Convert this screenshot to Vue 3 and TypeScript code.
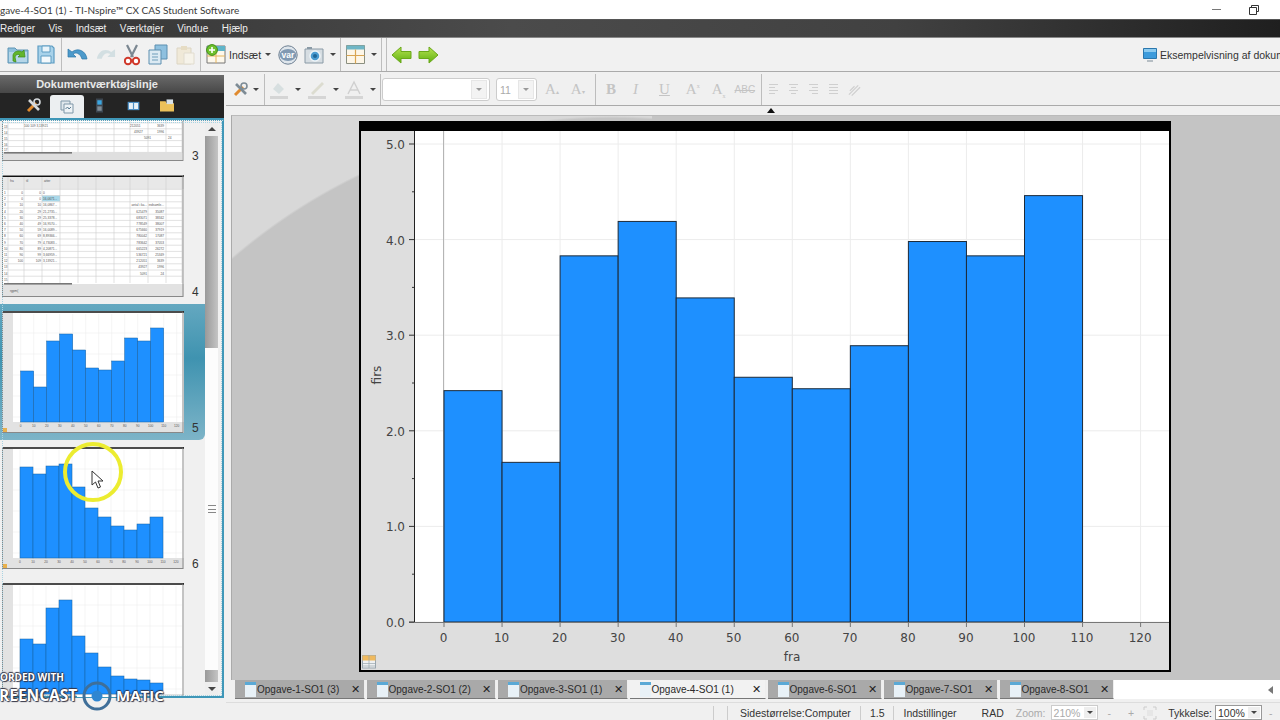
<script setup lang="ts">
const menus = ['Rediger', 'Vis', 'Indsæt', 'Værktøjer', 'Vindue', 'Hjælp'];

const bars = [2.42, 1.67, 3.83, 4.19, 3.39, 2.56, 2.44, 2.89, 3.98, 3.83, 4.46];
const xTicks = Array.from({ length: 13 }, (_, i) => i * 10);
const yTicks = [0, 1, 2, 3, 4, 5];
const yMinor = [0.5, 1.5, 2.5, 3.5, 4.5];
const xAt = (v: number) => 444 + v * 5.805;
const yAt = (v: number) => 622 - v * 95.6;

const tabs = [
  { name: 'Opgave-1-SO1 (3)', size: 'long' },
  { name: 'Opgave-2-SO1 (2)', size: 'long' },
  { name: 'Opgave-3-SO1 (1)', size: 'long' },
  { name: 'Opgave-4-SO1 (1)', size: 'active' },
  { name: 'Opgave-6-SO1', size: 'short' },
  { name: 'Opgave-7-SO1', size: 'short' },
  { name: 'Opgave-8-SO1', size: 'short' },
];

const chartThumbs = [
  { n: 5, selected: true, x0: 18.7, tops: [59, 75, 29, 22, 38, 56, 58, 49, 26, 29, 16] },
  { n: 6, selected: false, x0: 18, tops: [19, 26, 18, 16, 39, 60, 69, 78, 82, 76, 69] },
  { n: 7, selected: false, x0: 18, tops: [55, 60, 24, 16, 52, 69, 83, 92, 95, 96, 99] },
];

const alignPaths = [
  'M1 1.5h9M1 4.5h6M1 7.5h9M1 10.5h6',
  'M1 1.5h9M3 4.5h5M1 7.5h9M3 10.5h5',
  'M1 1.5h9M4 4.5h6M1 7.5h9M4 10.5h6',
  'M1 1.5h9M1 4.5h9M1 7.5h9M1 10.5h9',
];

const sheetCols = [0, 6, 22, 40, 58, 76, 94, 112, 128, 146, 164, 180];
const sheetRows = [
  ['0', '0', '0', '', ''],
  ['0', '0', '16,0671...', '', ''],
  ['10', '10', '16,0867...', 'antal i ka...', 'indsamle...'],
  ['20', '29', '21,2735...', '625479', '35087'],
  ['30', '29', '25,3378...', '683071', '38342'],
  ['40', '49', '16,9570...', '778549', '38007'],
  ['50', '59', '16,0089...', '675660', '37919'],
  ['60', '69', '8,89366...', '780042', '17087'],
  ['70', '79', '4,73083...', '783642', '37053'],
  ['80', '89', '4,20871...', '665223', '26272'],
  ['90', '99', '3,66959...', '536721', '25349'],
  ['100', '109', '3,13921...', '212051', '3639'],
  ['', '', '', '43927', '1996'],
  ['', '', '', '5091', '24'],
  ['', '', '', '', ''],
];
</script>

<template>
  <div class="app">
    <header class="title">
      <span>gave-4-SO1 (1) - TI-Nspire™ CX CAS Student Software</span>
      <div class="win">
        <i class="win-min"></i>
        <svg width="10" height="10" viewBox="0 0 10 10"><path d="M2.5 2.5V.5h7v6h-2M.5 2.5h7v7h-7z" fill="none" stroke="#333" /></svg>
      </div>
    </header>

    <nav class="menu">
      <span v-for="m in menus" :key="m">{{ m }}</span>
    </nav>

    <div class="toolbar">
      <div class="group first">
        <svg width="22" height="21" viewBox="0 0 22 21">
          <path d="M1 4h7l2 2h11v13H1z" fill="#8fc0dc" stroke="#5f94b4" />
          <path d="M2 8h18v10H2z" fill="#b5d6e8" />
          <path d="M6 11c1-4 6-5 9-3l2-2 1 7-7 0 2-2c-2-1-4-1-5 2l1 5-3-1z" fill="#62b52c" stroke="#3d8a15" stroke-width=".7" />
        </svg>
        <svg width="18" height="21" viewBox="0 0 18 21">
          <path d="M1 2h14l2 2v15H1z" fill="#a8d2ea" stroke="#5d9cc2" stroke-width="1.2" />
          <path d="M5 2h8v6H5z" fill="#e9f4fa" stroke="#5d9cc2" />
          <path d="M4 12h10v7H4z" fill="#f4f9fc" stroke="#5d9cc2" />
        </svg>
      </div>
      <i class="sep"></i>
      <div class="group">
        <svg width="21" height="21" viewBox="0 0 21 21">
          <path d="M1 5l0 8 8 0-3-3c3-2 7-1 9 5l5 0c-1-8-9-12-15-7z" fill="#4c9acb" stroke="#2d76a8" stroke-width=".7" stroke-linejoin="round" />
        </svg>
        <svg width="20" height="21" viewBox="0 0 21 21">
          <path d="M20 5l0 8-8 0 3-3c-3-2-7-1-9 5l-5 0c1-8 9-12 15-7z" fill="#d3dfe2" />
        </svg>
        <svg width="16" height="22" viewBox="0 0 16 22">
          <path d="M3 1l6 12M13 1L7 13" stroke="#7b8791" stroke-width="2.2" fill="none" />
          <circle cx="4" cy="17" r="3.2" fill="#fff" stroke="#d0392b" stroke-width="2" />
          <circle cx="12" cy="17" r="3.2" fill="#fff" stroke="#d0392b" stroke-width="2" />
        </svg>
        <svg width="20" height="21" viewBox="0 0 20 21">
          <path d="M7 1h12v14H7z" fill="#8ec0df" stroke="#5d8fb0" />
          <path d="M1 6h12v14H1z" fill="#dceaf3" stroke="#5d8fb0" />
          <path d="M4 10h6M4 13h6M4 16h6" stroke="#6f9dba" />
        </svg>
        <svg width="19" height="21" viewBox="0 0 19 21">
          <path d="M1 4h14v16H1z" fill="#f0e9d8" stroke="#dcd5c3" />
          <path d="M5 2h6v4H5z" fill="#e6dcc4" />
          <path d="M8 9h10v11H8z" fill="#f6f3ea" stroke="#e1dccf" />
        </svg>
      </div>
      <i class="sep"></i>
      <div class="group insert">
        <svg width="20" height="21" viewBox="0 0 20 21">
          <path d="M1 2h18v17H1z" fill="#fdf8ec" stroke="#777" />
          <path d="M1 2h18v5H1z" fill="#5fb4c9" />
          <path d="M10 7v12M1 12h18" stroke="#e6b45c" />
          <circle cx="6" cy="6" r="5.4" fill="#6fc12e" stroke="#3f8f14" />
          <path d="M6 3v6M3 6h6" stroke="#fff" stroke-width="1.6" />
        </svg>
        <span class="tb-label">Indsæt</span>
        <i class="caret"></i>
        <svg class="var-icon" width="20" height="20" viewBox="0 0 20 20">
          <circle cx="10" cy="10" r="9.2" fill="#dfe6ec" stroke="#6d7f92" />
          <ellipse cx="10" cy="10" rx="8.4" ry="6" fill="#8199b2" />
          <text x="10" y="13" text-anchor="middle" class="var-text">var</text>
        </svg>
        <svg class="cam-icon" width="20" height="18" viewBox="0 0 20 18">
          <path d="M1 3h18v14H1z" fill="#d6dde2" stroke="#8a9aa6" />
          <path d="M3 1h5v2H3z" fill="#8a9aa6" />
          <circle cx="11" cy="10" r="5" fill="#4a9bd0" stroke="#eef4f8" stroke-width="1.5" />
          <circle cx="11" cy="10" r="2" fill="#1f6698" />
        </svg>
        <i class="caret"></i>
      </div>
      <i class="sep"></i>
      <div class="group layout">
        <svg width="19" height="19" viewBox="0 0 19 19">
          <path d="M.5.5h18v18H.5z" fill="#fdf6e8" stroke="#8a8f80" />
          <path d="M.5.5h18v4H.5z" fill="#6fb6c6" />
          <path d="M9.5 4.5v14M.5 10.5h18" stroke="#d9a552" stroke-width="1.2" />
        </svg>
        <i class="caret"></i>
      </div>
      <i class="sep"></i>
      <i class="sep second"></i>
      <div class="group arrows">
        <svg width="21" height="20" viewBox="0 0 21 20">
          <defs>
            <linearGradient id="go" x1="0" y1="0" x2="0" y2="1">
              <stop offset="0" stop-color="#b6e352" />
              <stop offset="1" stop-color="#5fb010" />
            </linearGradient>
          </defs>
          <path d="M1 10L10 2v4.5h10v7H10V18z" fill="url(#go)" stroke="#6aa81a" stroke-linejoin="round" />
        </svg>
        <svg width="21" height="20" viewBox="0 0 21 20">
          <path d="M20 10L11 2v4.5H1v7h10V18z" fill="url(#go)" stroke="#6aa81a" stroke-linejoin="round" />
        </svg>
      </div>
      <div class="preview">
        <svg width="14" height="14" viewBox="0 0 14 14">
          <path d="M.5.5h13v10H.5z" fill="#3c9bdc" stroke="#2b77ad" />
          <path d="M1 1h12v3H1z" fill="#8ccbf0" />
          <path d="M4 12.5h6v1H4z" fill="#7b8b96" />
        </svg>
        <span>Eksempelvisning af dokument</span>
      </div>
    </div>

    <div class="workspace">
      <aside class="side">
        <div class="side-head">Dokumentværktøjslinje</div>
        <div class="side-tabs">
          <svg width="15" height="15" viewBox="0 0 15 15">
            <path d="M2 13L10 5" stroke="#e08a2e" stroke-width="3" />
            <path d="M3 2l10 10" stroke="#d5d9dc" stroke-width="2.6" />
            <circle cx="11" cy="4" r="3" fill="none" stroke="#d5d9dc" stroke-width="1.6" />
          </svg>
          <div class="side-tab">
            <svg width="14" height="14" viewBox="0 0 14 14">
              <path d="M1 1h9v9H1z" fill="#dfe7ec" stroke="#7f97a8" />
              <path d="M4 4h9v9H4z" fill="#eef3f6" stroke="#7f97a8" />
              <path d="M5.5 9l2-2 1.5 2 2-2" fill="none" stroke="#5a7c92" />
            </svg>
          </div>
          <svg class="hand" width="7" height="15" viewBox="0 0 8 16">
            <path d="M0 0h8v16H0z" fill="#3c4650" />
            <path d="M1.5 2h5v5h-5z" fill="#3ba6e0" />
            <path d="M1.5 9h5v5h-5z" fill="#808c96" />
          </svg>
          <svg class="book" width="13" height="10" viewBox="0 0 14 12">
            <path d="M0 1h14v10H0z" fill="#4d8fc4" />
            <path d="M1.5 2.5h4.8v7H1.5zM7.7 2.5h4.8v7H7.7z" fill="#e6f1f8" />
          </svg>
          <svg class="fold" width="14" height="13" viewBox="0 0 15 13">
            <path d="M0 2h6l1 2h8v9H0z" fill="#ecc15a" />
            <path d="M7 0h7v5H7z" fill="#d9e3ea" />
          </svg>
        </div>
        <div class="list">
          <div class="rows">
            <div class="row row-clip">
              <svg class="thumb" width="182" height="122" viewBox="0 0 182 122">
                <rect width="182" height="122" fill="#fff" />
                <g v-for="i in 7" :key="i">
                  <line x1="0" x2="180" :y1="78 + i * 5.9" :y2="78 + i * 5.9" stroke="#ccc" stroke-width=".6" />
                  <text v-if="i > 1" x="2" :y="77 + i * 5.9" class="tiny">{{ 11 + i }}</text>
                </g>
                <line v-for="c in sheetCols" :key="c" :x1="c" :x2="c" y1="0" y2="114" stroke="#ccc" stroke-width=".6" />
                <text x="22" y="88" class="tiny">100 109 3,13921</text>
                <text x="128" y="88" class="tiny">212051</text>
                <text x="155" y="88" class="tiny">3639</text>
                <text x="132" y="94" class="tiny">43927</text>
                <text x="155" y="94" class="tiny">1996</text>
                <text x="142" y="100" class="tiny">5091</text>
                <text x="166" y="100" class="tiny">24</text>
                <rect y="113" width="180" height="9" fill="#dfdfdf" />
                <rect x="2" y="113" width="68" height="1.6" fill="#777" />
                <rect x=".5" y=".5" width="180.5" height="121" fill="none" stroke="#888" />
              </svg>
              <span class="num">3</span>
            </div>

            <div class="row">
              <svg class="thumb" width="182" height="122" viewBox="0 0 182 122">
                <rect width="182" height="122" fill="#fff" />
                <rect width="182" height="2" fill="#111" />
                <rect y="2" width="182" height="12" fill="#e8e8e8" />
                <rect x="40" y="20.5" width="18" height="6" fill="#a8d8ea" />
                <text x="8" y="7" class="tiny">fra</text>
                <text x="24" y="7" class="tiny">til</text>
                <text x="42" y="7" class="tiny">atter</text>
                <g v-for="(r, i) in sheetRows" :key="i">
                  <line x1="0" x2="180" :y1="14.4 + i * 6.2" :y2="14.4 + i * 6.2" stroke="#ccc" stroke-width=".6" />
                  <text x="2" :y="19 + i * 6.2" class="tiny">{{ i + 1 }}</text>
                  <text x="21" :y="19 + i * 6.2" class="tiny" text-anchor="end">{{ r[0] }}</text>
                  <text x="39" :y="19 + i * 6.2" class="tiny" text-anchor="end">{{ r[1] }}</text>
                  <text x="41" :y="19 + i * 6.2" class="tiny">{{ r[2] }}</text>
                  <text x="145" :y="19 + i * 6.2" class="tiny" text-anchor="end">{{ r[3] }}</text>
                  <text x="162" :y="19 + i * 6.2" class="tiny" text-anchor="end">{{ r[4] }}</text>
                </g>
                <line v-for="c in sheetCols" :key="c" :x1="c" :x2="c" y1="2" y2="108" stroke="#ccc" stroke-width=".6" />
                <rect y="109" width="182" height="13" fill="#e2e2e2" />
                <rect x="2" y="108" width="68" height="1.6" fill="#777" />
                <text x="8" y="117" class="tiny">rgpm(</text>
                <rect x=".5" y=".5" width="180.5" height="121" fill="none" stroke="#888" />
              </svg>
              <span class="num">4</span>
            </div>

            <div v-for="t in chartThumbs" :key="t.n" class="row" :class="{ selected: t.selected }">
              <svg class="thumb" width="182" height="122" viewBox="0 0 182 122">
                <rect width="182" height="122" fill="#fff" />
                <rect y="111" width="182" height="11" fill="#e2e2e2" />
                <rect width="11" height="122" fill="#e2e2e2" />
                <g transform="translate(0 1)">
                  <line v-for="g in 13" :key="'v' + g" :x1="t.x0 + (g - 1) * 13" :x2="t.x0 + (g - 1) * 13" y1="2" y2="110" stroke="#eee" stroke-width=".6" />
                  <line v-for="g in 5" :key="'h' + g" x1="11" x2="180" :y1="g * 21" :y2="g * 21" stroke="#eee" stroke-width=".6" />
                  <rect
                    v-for="(top, i) in t.tops"
                    :key="i"
                    :x="t.x0 + i * 13"
                    :y="top"
                    width="13"
                    :height="110 - top"
                    fill="#1e90ff"
                    stroke="#17609f"
                    stroke-width=".5"
                  />
                  <template v-if="t.n < 7">
                    <text v-for="g in 13" :key="'l' + g" :x="t.x0 + (g - 1) * 13" y="115" class="tiny" text-anchor="middle">{{ (g - 1) * 10 }}</text>
                  </template>
                </g>
                <rect width="182" height="2" fill="#111" />
                <rect x=".5" y="1" width="180.5" height="120.5" fill="none" stroke="#888" />
                <rect x="1" y="117" width="4" height="4" fill="#e8b04c" />
              </svg>
              <span v-if="t.n < 7" class="num">{{ t.n }}</span>
            </div>
          </div>

          <div class="scroll">
            <div class="scroll-btn"><i class="tri up"></i></div>
            <div class="scroll-track top"></div>
            <div class="scroll-thumb"><i class="grip"></i></div>
            <div class="scroll-track bottom"></div>
            <div class="scroll-btn"><i class="tri down"></i></div>
          </div>
        </div>
      </aside>

      <main class="content">
        <div class="format">
          <svg width="15" height="15" viewBox="0 0 15 15">
            <path d="M2 13L10 5" stroke="#e08a2e" stroke-width="3" />
            <path d="M3 2l10 10" stroke="#7d8b95" stroke-width="2.6" />
            <circle cx="11" cy="4" r="3" fill="none" stroke="#7d8b95" stroke-width="1.6" />
          </svg>
          <i class="caret f-caret"></i>
          <i class="sep f-sep"></i>
          <div class="f-color c-fill">
            <svg width="18" height="19" viewBox="0 0 18 19">
              <path d="M3 9l5-6 6 6-5 5z" fill="#d7dfe0" />
              <path d="M0 16h18v3H0z" fill="#d5d5d5" />
            </svg>
            <i class="caret"></i>
          </div>
          <div class="f-color c-pen">
            <svg width="18" height="19" viewBox="0 0 18 19">
              <path d="M3 13L14 2l2 2L5 15z" fill="#dcdcd0" />
              <path d="M0 16h18v3H0z" fill="#d5d5d5" />
            </svg>
            <i class="caret"></i>
          </div>
          <div class="f-color c-text">
            <svg width="18" height="19" viewBox="0 0 18 19">
              <path d="M3 14L9 2l6 12M5 10h8" fill="none" stroke="#cfcfcf" stroke-width="1.4" />
              <path d="M0 16h18v3H0z" fill="#d5d5d5" />
            </svg>
            <i class="caret"></i>
          </div>
          <i class="sep f-sep-flush"></i>
          <div class="select font-select"><b class="sel-btn"><i class="caret"></i></b></div>
          <div class="select size-select"><span>11</span><b class="sel-btn"><i class="caret"></i></b></div>
          <div class="glyphs sizes">
            <span>A<small>▴</small></span>
            <span>A<small>▾</small></span>
          </div>
          <i class="sep f-sep"></i>
          <div class="glyphs styles">
            <b>B</b>
            <em>I</em>
            <u>U</u>
            <span>A<sup>x</sup></span>
            <span>A<sub>x</sub></span>
            <s class="abc">ABC</s>
          </div>
          <i class="sep f-sep"></i>
          <div class="aligns">
            <svg v-for="p in alignPaths" :key="p" width="11" height="13" viewBox="0 0 11 13">
              <path :d="p" stroke="#cfcfcf" />
            </svg>
            <svg width="13" height="14" viewBox="0 0 14 14">
              <path d="M1 12L11 2M4 13L13 4M2 8l5-5" stroke="#cfcfcf" stroke-width="1.3" />
            </svg>
          </div>
        </div>
        <div class="strip"><i class="strip-tri"></i></div>

        <div class="doc">
          <svg class="page" width="812" height="551" viewBox="359 121 812 551">
            <rect x="359" y="121" width="812" height="551" fill="#000" />
            <rect x="361" y="131" width="808" height="539" fill="#dedede" />
            <rect x="414" y="131" width="755" height="491" fill="#fff" />
            <line v-for="v in xTicks" :key="'gx' + v" :x1="xAt(v)" :x2="xAt(v)" y1="131" y2="622" stroke="#ececec" />
            <line v-for="v in yTicks" :key="'gy' + v" x1="414" x2="1169" :y1="yAt(v)" :y2="yAt(v)" stroke="#ececec" />
            <line x1="443.5" x2="443.5" y1="131" y2="622" stroke="#b5b5b5" />
            <rect
              v-for="(b, i) in bars"
              :key="i"
              :x="xAt(i * 10)"
              :y="yAt(b)"
              width="58.05"
              :height="622 - yAt(b)"
              class="bar"
            />
            <line x1="414.5" x2="414.5" y1="131" y2="622" stroke="#222" />
            <line x1="409" x2="1169" y1="622.5" y2="622.5" stroke="#777" />
            <g v-for="v in yTicks" :key="'ty' + v">
              <line x1="409" x2="414" :y1="yAt(v)" :y2="yAt(v)" stroke="#333" />
              <text x="405" :y="yAt(v) + 5" text-anchor="end" class="axis">{{ v.toFixed(1) }}</text>
            </g>
            <line v-for="v in yMinor" :key="'my' + v" x1="412" x2="414" :y1="yAt(v)" :y2="yAt(v)" stroke="#333" />
            <g v-for="v in xTicks" :key="'tx' + v">
              <line :x1="xAt(v)" :x2="xAt(v)" y1="622" y2="627" stroke="#777" />
              <text :x="xAt(v) - 0.5" y="642" text-anchor="middle" class="axis">{{ v }}</text>
            </g>
            <text x="792" y="661" text-anchor="middle" class="axis">fra</text>
            <text x="381" y="375" text-anchor="middle" class="axis" transform="rotate(-90 381 375)">firs</text>
            <rect x="362.5" y="655.5" width="13" height="12.5" fill="#eef0f2" stroke="#9aa6ae" />
            <rect x="362.5" y="655.5" width="13" height="5" fill="#efb95e" />
            <path d="M362 663.5h13M362 666h13M369 655v13" stroke="#9aa6ae" stroke-width=".7" />
          </svg>
        </div>

        <div class="doc-tabs">
          <div v-for="t in tabs" :key="t.name" class="doc-tab" :class="t.size">
            <svg width="11" height="15" viewBox="0 0 11 15">
              <rect width="11" height="15" fill="#e8f1f7" />
              <rect width="11" height="3" fill="#5aa9d6" />
            </svg>
            <span class="doc-name">{{ t.name }}</span>
            <span class="doc-x">✕</span>
          </div>
          <div class="tab-rest"><i class="tri left"></i></div>
        </div>
      </main>
    </div>

    <footer class="status">
      <i class="sep"></i>
      <i class="sep s2"></i>
      <span class="s3">Sidestørrelse:Computer</span>
      <i class="sep"></i>
      <span>1.5</span>
      <i class="sep"></i>
      <span>Indstillinger</span>
      <span class="far">RAD</span>
      <span class="off z">Zoom:</span>
      <div class="st-input off zi">210%<b class="st-btn"><i class="caret"></i></b></div>
      <span class="off minus">-</span>
      <span class="off plus">+</span>
      <svg width="14" height="14" viewBox="0 0 14 14">
        <path d="M1 4V1h3M10 1h3v3M13 10v3h-3M4 13H1v-3" fill="none" stroke="#ccc" />
        <rect x="4" y="4" width="6" height="6" fill="#e6e6e6" />
      </svg>
      <span class="tyk">Tykkelse:</span>
      <div class="st-input ti">100%<b class="st-btn"><i class="caret"></i></b></div>
      <span class="off tm">-</span>
    </footer>

    <!-- screen recorder overlays -->
    <div class="pointer-ring"></div>
    <svg class="pointer" width="13" height="19" viewBox="0 0 13 19">
      <path d="M1 1v14l3.5-3 2.5 6 2.5-1-2.5-6H12z" fill="#fff" stroke="#333" />
    </svg>
    <div class="mark mark-top">ORDED WITH</div>
    <div class="mark mark-left">REENCAST</div>
    <svg class="mark-logo" width="40" height="32" viewBox="0 0 40 32">
      <path d="M0 16h40" stroke="#fff" stroke-width="2" />
      <circle cx="20" cy="16" r="13" fill="none" stroke="#3f6f99" stroke-width="3" />
      <circle cx="20" cy="16" r="5.5" fill="#2f86d1" />
    </svg>
    <div class="mark mark-right">MATIC</div>
  </div>
</template>

<style>
html,
body {
  margin: 0;
  background: #f0f0f0;
}
</style>

<style scoped>
.app {
  position: relative;
  width: 1280px;
  height: 720px;
  overflow: hidden;
  display: flex;
  flex-direction: column;
  font-family: 'Liberation Sans', Arial, sans-serif;
  font-size: 10.5px;
  color: #333;
  background: #f0f0f0;
}
i {
  display: block;
  flex: none;
}
svg {
  display: block;
  flex: none;
}

.title {
  height: 19px;
  flex: none;
  display: flex;
  justify-content: space-between;
  align-items: center;
  background: #fff;
  font-family: Lato, sans-serif;
  font-size: 10px;
  color: #3a3a3a;
}
.win {
  display: flex;
  align-items: center;
  gap: 28px;
  padding-right: 21px;
}
.win-min {
  width: 9px;
  height: 1px;
  background: #777;
}

.menu {
  height: 19px;
  flex: none;
  display: flex;
  align-items: center;
  gap: 13.5px;
  padding-bottom: 1px;
  box-sizing: border-box;
  font-size: 10px;
  color: #eee;
  background: linear-gradient(90deg, #333 0%, #4b4b4b 40%, #414141 70%, #1f1f1f 100%);
  border-top: 1px solid #555;
  border-bottom: 1px solid #888;
}

.toolbar {
  height: 34px;
  flex: none;
  box-sizing: border-box;
  display: flex;
  align-items: center;
  border-bottom: 1px solid #aaa;
  background: #f1f1f1;
}
.group {
  display: flex;
  align-items: center;
  gap: 8px;
  padding: 0 5px;
}
.group.first {
  padding: 0 6px 0 7px;
}
.group.insert {
  gap: 0;
  padding-right: 4px;
}
.var-icon {
  margin-left: 7px;
}
.cam-icon {
  margin-left: 6px;
}
.tb-label {
  margin-left: 3px;
}
.insert .caret {
  margin-left: 6px;
}
.insert .tb-label + .caret {
  margin-left: 4px;
}
.group.layout {
  gap: 6px;
  padding: 0 4px 0 5px;
}
.group.arrows {
  gap: 6px;
  padding-left: 4px;
}
.sep {
  width: 1px;
  height: 100%;
  background: #bdbdbd;
}
.sep.second {
  margin-left: 4px;
}
.caret {
  width: 0;
  height: 0;
  border-style: solid;
  border-width: 3px 3px 0;
  border-color: #444 transparent transparent;
}
.preview {
  margin-left: auto;
  display: flex;
  align-items: center;
  gap: 3px;
  width: 137px;
  white-space: nowrap;
  overflow: hidden;
  flex: none;
}

.workspace {
  flex: 1;
  min-height: 0;
  display: flex;
}
.side {
  width: 224px;
  flex: none;
  display: flex;
  flex-direction: column;
  padding-top: 3px;
  box-sizing: border-box;
}
.side-head {
  height: 18px;
  flex: none;
  line-height: 18px;
  padding-right: 30px;
  text-align: center;
  font-weight: 700;
  font-size: 11px;
  color: #e8e8e8;
  background: linear-gradient(#6a6a6a, #474747);
}
.side-tabs {
  height: 27px;
  flex: none;
  box-sizing: border-box;
  display: flex;
  align-items: center;
  padding-left: 26px;
  background: #242424;
  border-bottom: 2px solid #3f97b8;
}
.side-tab {
  width: 34px;
  height: 23px;
  margin: 2px 12px 0 9px;
  display: flex;
  align-items: center;
  justify-content: center;
  border-radius: 3px 3px 0 0;
  background: #eceff1;
}
.book {
  margin-left: 24px;
}
.fold {
  margin-left: 20px;
}
.list {
  height: 578px;
  flex: none;
  box-sizing: border-box;
  display: flex;
  border-right: 2px solid #3f97b8;
  border-bottom: 2px solid #3f97b8;
  border-top: 1px dotted #5aa0bb;
  outline: 1px dotted #a9d3e2;
  outline-offset: -3px;
  background: #f0f0f0;
  overflow: hidden;
}
.rows {
  width: 205px;
  flex: none;
  display: flex;
  flex-direction: column;
}
.row {
  height: 136px;
  flex: none;
  box-sizing: border-box;
  display: flex;
  align-items: flex-end;
  padding: 0 0 7px 2px;
  overflow: hidden;
}
.row-clip {
  height: 47px;
}
.row.selected {
  border-radius: 0 0 6px 0;
  background: linear-gradient(#64a8c0, #3f93b0 40%, #7db4c8);
}
.thumb {
  flex: none;
}
.num {
  margin-left: 8px;
  font-size: 12px;
  line-height: 10px;
  color: #333;
}
.tiny {
  font-size: 3.2px;
  fill: #555;
}
.var-text {
  font-size: 8.5px;
  font-weight: 700;
  fill: #fff;
}

.scroll {
  width: 13px;
  flex: none;
  display: flex;
  flex-direction: column;
  margin-top: 1px;
}
.scroll-btn {
  height: 14px;
  flex: none;
  display: flex;
  align-items: center;
  justify-content: center;
  background: #eee;
}
.scroll-track {
  background: linear-gradient(90deg, #999, #c4c4c4);
}
.scroll-track.top {
  height: 212px;
  flex: none;
}
.scroll-track.bottom {
  flex: 1;
}
.scroll-thumb {
  height: 322px;
  flex: none;
  display: flex;
  align-items: center;
  justify-content: center;
  background: #fcfcfc;
}
.grip {
  width: 8px;
  height: 6px;
  border-top: 1px solid #888;
  border-bottom: 1px solid #888;
  background: linear-gradient(#888, #888) center / 100% 1px no-repeat;
}
.tri {
  width: 0;
  height: 0;
  border-style: solid;
}
.tri.up {
  border-width: 0 4px 4px;
  border-color: transparent transparent #444;
}
.tri.down {
  border-width: 4px 4px 0;
  border-color: #444 transparent transparent;
}
.tri.left {
  border-width: 4px 5px 4px 0;
  border-color: transparent #777 transparent transparent;
}

.content {
  flex: 1;
  min-width: 0;
  display: flex;
  flex-direction: column;
  padding-left: 2px;
}
.format {
  height: 34px;
  flex: none;
  box-sizing: border-box;
  display: flex;
  align-items: center;
  padding: 2px 0 0 7px;
  border-bottom: 1px solid #aaa;
}
.f-caret {
  margin-left: 5px;
}
.f-sep {
  margin: 0 5px;
}
.f-sep-flush {
  margin: 0;
}
.f-color {
  display: flex;
  align-items: center;
  gap: 7px;
  flex: none;
}
.c-fill {
  width: 38px;
}
.c-pen {
  width: 37px;
}
.c-text {
  width: 35px;
}
.select {
  height: 23px;
  flex: none;
  box-sizing: border-box;
  display: flex;
  align-items: center;
  justify-content: space-between;
  border: 1px solid #ccc;
  border-radius: 3px;
  background: #fff;
  color: #aaa;
}
.font-select {
  width: 108px;
  margin-left: 1px;
  justify-content: flex-end;
}
.size-select {
  width: 41px;
  margin-left: 6px;
  padding-left: 3px;
}
.sel-btn {
  width: 16px;
  height: 19px;
  margin-right: 2px;
  display: flex;
  align-items: center;
  justify-content: center;
  background: #f3f3f3;
  border: 1px solid #e6e6e6;
  box-sizing: border-box;
}
.select .caret {
  border-top-color: #999;
}
.glyphs {
  display: flex;
  align-items: center;
  font-family: 'Liberation Serif', serif;
  font-size: 15px;
  color: #c4c4c4;
  flex: none;
}
.sizes {
  width: 45px;
  margin-left: 8px;
  gap: 12px;
}
.glyphs small {
  font-size: 6px;
}
.glyphs sup,
.glyphs sub {
  font-size: 6px;
  line-height: 0;
}
.styles {
  width: 150px;
  margin-left: 5px;
}
.styles em {
  margin-left: 17px;
}
.styles u {
  margin-left: 21px;
}
.styles span {
  margin-left: 16px;
}
.styles span + span {
  margin-left: 12px;
}
.abc {
  margin-left: 9px;
  font-family: 'Liberation Sans', sans-serif;
  font-size: 10px;
}
.aligns {
  display: flex;
  align-items: center;
  gap: 9px;
  padding-left: 1px;
}
.strip {
  height: 9px;
  flex: none;
  padding-left: 541px;
}
.strip-tri {
  width: 0;
  height: 0;
  margin-top: 2px;
  border-style: solid;
  border-width: 0 4px 5px;
  border-color: transparent transparent #111;
}
.doc {
  height: 565px;
  flex: none;
  margin-left: 5px;
  box-sizing: border-box;
  padding: 5px 0 0 127px;
  border-left: 1px solid #aaa;
  border-top: 1px solid #bbb;
  background: radial-gradient(circle 583px at 380px 583px, transparent 99.6%, #d8d8d8 100%) 0 0 / 420px 100% no-repeat #c4c4c4;
}
.bar {
  fill: #1e90ff;
  stroke: #1d2b3a;
  stroke-width: 1;
}
.axis {
  font-family: 'DejaVu Sans', sans-serif;
  font-size: 12px;
  fill: #444;
}

.doc-tabs {
  height: 23px;
  flex: none;
  box-sizing: border-box;
  display: flex;
  gap: 2px;
  padding-left: 9px;
  border-bottom: 1px solid #ddd;
  background: #f0f0f0;
}
.doc-tab {
  height: 19px;
  flex: none;
  box-sizing: border-box;
  display: flex;
  align-items: center;
  padding: 0 4px 0 10px;
  font-size: 10px;
  background: #a9a9a9;
  border-bottom: 1px solid #777;
  border-right: 1px solid #eee;
  color: #2a2a2a;
}
.doc-tab.long {
  width: 129.5px;
}
.doc-tab.active {
  width: 136px;
  background: #f2f2f2;
}
.doc-tab.short {
  width: 114px;
}
.doc-name {
  margin-left: 1px;
  white-space: nowrap;
}
.doc-x {
  margin-left: auto;
  font-size: 11px;
  color: #222;
}
.tab-rest {
  flex: 1;
  height: 19px;
  margin-left: -2px;
  display: flex;
  align-items: center;
  justify-content: flex-end;
  padding-right: 7px;
  background: #fff;
}

.status {
  height: 17px;
  flex: none;
  box-sizing: border-box;
  display: flex;
  align-items: center;
  gap: 9px;
  padding: 2px 0 0 713px;
  white-space: nowrap;
}
.status .sep {
  height: 14px;
  background: #ccc;
}
.status .s2 {
  margin-left: 4px;
}
.s3 {
  margin-left: 3px;
}
.far {
  margin-left: 16px;
}
.z {
  margin-left: 3px;
}
.off {
  color: #aaa;
}
.zi {
  margin-left: -4px;
}
.minus {
  margin-left: 1px;
}
.plus {
  margin-left: 8px;
}
.tyk {
  margin-left: 2px;
}
.ti {
  margin-left: -6px;
  width: 50px;
}
.tm {
  margin-left: -2px;
}
.st-input {
  width: 47px;
  height: 15px;
  flex: none;
  box-sizing: border-box;
  display: flex;
  align-items: center;
  justify-content: space-between;
  padding-left: 2px;
  border: 1px solid #999;
  background: #fff;
}
.st-input.off {
  border-color: #ccc;
}
.st-btn {
  width: 12px;
  height: 11px;
  margin-right: 1px;
  display: flex;
  align-items: center;
  justify-content: center;
  background: #eee;
}

.pointer-ring {
  position: absolute;
  left: 63px;
  top: 442px;
  width: 60px;
  height: 60px;
  box-sizing: border-box;
  border: 4px solid #ecec30;
  border-radius: 50%;
}
.pointer {
  position: absolute;
  left: 91px;
  top: 470px;
}
.mark {
  position: absolute;
  font-family: 'Open Sans', sans-serif;
  font-weight: 700;
  color: #fff;
  white-space: nowrap;
  text-shadow: 1px 1px 1px #334, -1px 0 1px #334, 0 -1px 1px #334;
}
.mark-top {
  left: 0;
  top: 670px;
  font-size: 10px;
  line-height: 14px;
}
.mark-left {
  left: -1px;
  top: 685px;
  font-size: 15.5px;
  line-height: 20px;
}
.mark-right {
  left: 116px;
  top: 685px;
  font-size: 15px;
  line-height: 20px;
}
.mark-logo {
  position: absolute;
  left: 77px;
  top: 680px;
}
</style>
